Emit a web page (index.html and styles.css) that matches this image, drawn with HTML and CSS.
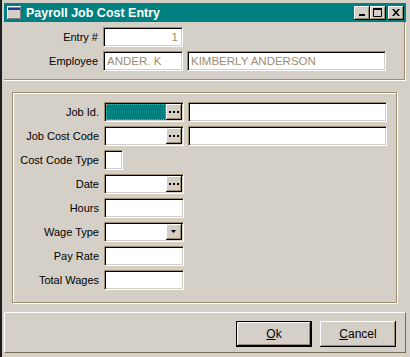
FILE: index.html
```html
<!DOCTYPE html>
<html>
  <head>
    <link rel="stylesheet" href="styles.css">
  </head>
  <body>
    <div class="window">

      <div class="titlebar">
        <svg class="app-icon" width="14" height="13" viewBox="0 0 14 13">
          <rect x="0" y="0" width="14" height="13" fill="#ffffff"/>
          <rect x="1" y="1" width="13" height="12" fill="#808080"/>
          <rect x="1" y="1" width="12" height="11" fill="#d4d0c8"/>
          <rect x="1" y="1" width="12" height="3" fill="#1c3c9c"/>
          <rect x="1" y="1" width="12" height="1" fill="#6a8ad8"/>
        </svg>
        <span class="title">Payroll Job Cost Entry</span>
        <div class="caption-buttons">
          <span class="cap-btn">
            <svg width="8" height="8" viewBox="0 0 8 8"><rect x="1" y="6" width="6" height="2" fill="#000"/></svg>
          </span>
          <span class="cap-btn">
            <svg width="9" height="9" viewBox="0 0 9 9"><path d="M0.5 1.5h8v7h-8z" fill="none" stroke="#000"/><rect x="0" y="0" width="9" height="2" fill="#000"/></svg>
          </span>
          <span class="cap-btn close">
            <svg width="8" height="7" viewBox="0 0 8 7"><path d="M0 0h2l2 2.5 2-2.5h2l-3 3.5 3 3.5h-2l-2-2.5-2 2.5h-2l3-3.5z" fill="#000"/></svg>
          </span>
        </div>
      </div>

      <!-- header: entry number and employee -->
      <div class="panel header-panel">
        <div class="row">
          <span class="label">Entry #</span>
          <div class="field ro num">1</div>
        </div>
        <div class="row">
          <span class="label">Employee</span>
          <div class="field ro">ANDER. K</div>
          <div class="field ro wide">KIMBERLY ANDERSON</div>
        </div>
      </div>

      <!-- job cost details -->
      <div class="panel body-panel">
        <div class="group">
          <div class="row">
            <span class="label">Job Id.</span>
            <div class="field picker">
              <div class="value focused"></div>
              <span class="mini-btn">
                <svg width="10" height="4" viewBox="0 0 10 4"><rect x="0" y="1" width="2" height="2" fill="#000"/><rect x="4" y="1" width="2" height="2" fill="#000"/><rect x="8" y="1" width="2" height="2" fill="#000"/></svg>
              </span>
            </div>
            <div class="field wide"></div>
          </div>
          <div class="row">
            <span class="label">Job Cost Code</span>
            <div class="field picker">
              <div class="value"></div>
              <span class="mini-btn">
                <svg width="10" height="4" viewBox="0 0 10 4"><rect x="0" y="1" width="2" height="2" fill="#000"/><rect x="4" y="1" width="2" height="2" fill="#000"/><rect x="8" y="1" width="2" height="2" fill="#000"/></svg>
              </span>
            </div>
            <div class="field wide"></div>
          </div>
          <div class="row">
            <span class="label">Cost Code Type</span>
            <div class="field tiny"></div>
          </div>
          <div class="row">
            <span class="label">Date</span>
            <div class="field picker">
              <div class="value"></div>
              <span class="mini-btn">
                <svg width="10" height="4" viewBox="0 0 10 4"><rect x="0" y="1" width="2" height="2" fill="#000"/><rect x="4" y="1" width="2" height="2" fill="#000"/><rect x="8" y="1" width="2" height="2" fill="#000"/></svg>
              </span>
            </div>
          </div>
          <div class="row">
            <span class="label">Hours</span>
            <div class="field"></div>
          </div>
          <div class="row">
            <span class="label">Wage Type</span>
            <div class="field picker">
              <div class="value"></div>
              <span class="mini-btn">
                <svg width="5" height="3" viewBox="0 0 5 3"><path d="M0 0h5l-2.5 3z" fill="#000"/></svg>
              </span>
            </div>
          </div>
          <div class="row">
            <span class="label">Pay Rate</span>
            <div class="field"></div>
          </div>
          <div class="row">
            <span class="label">Total Wages</span>
            <div class="field"></div>
          </div>
        </div>
      </div>

      <div class="panel footer-panel">
        <button class="btn default"><u>O</u>k</button>
        <button class="btn"><u>C</u>ancel</button>
      </div>

    </div>
  </body>
</html>
```

FILE: styles.css
```css
body{
  margin:0;
  background-color:#d4d0c8;
  font-family:'Liberation Sans', Arial, sans-serif;
  font-size:11px;
  color:#000;
}

.window{
  box-sizing:border-box;
  width:410px;
  height:357px;
  background-color:#d4d0c8;
  border-left:2px solid #1c1c1c;
  padding:3px 4px 4px 2px;
  display:flex;
  flex-direction:column;
}

/* title bar */
.titlebar{
  height:19px;
  background-color:#008080;
  display:flex;
  align-items:center;
  padding-left:3px;
}
.app-icon{
  margin-right:5px;
}
.title{
  color:#fff;
  font-weight:bold;
  font-size:12.5px;
  flex:1;
}
.caption-buttons{
  display:flex;
  align-items:center;
  margin-right:2px;
}
.cap-btn{
  box-sizing:border-box;
  width:16px;
  height:14px;
  background-color:#d4d0c8;
  box-shadow:inset -1px -1px 0 #000, inset 1px 1px 0 #fff, inset -2px -2px 0 #9d8d6d;
  display:flex;
  align-items:center;
  justify-content:center;
}
.cap-btn svg{
  margin:0 1px 1px 0;
}
.cap-btn.close{
  margin-left:2px;
}

/* panels */
.panel{
  box-sizing:border-box;
}
.header-panel{
  height:58px;
  padding-top:5px;
  border-bottom:1px solid #9d8d6d;
  border-right:1px solid #9d8d6d;
  margin-right:1px;
  box-shadow:1px 1px 0 #fff;
}
.header-panel .label{
  width:94px;
}
.body-panel{
  height:232px;
  border-top:1px solid #fff;
  padding:11px 0 0 8px;
}
.group{
  box-sizing:border-box;
  width:385px;
  height:211px;
  border:1px solid #9d8d6d;
  box-shadow:inset 1px 1px 0 #fff, 1px 1px 0 #fff;
  padding:9px 0 0 1px;
}
.group .label{
  width:85px;
}
.footer-panel{
  height:41px;
  border-top:1px solid #fff;
  border-left:1px solid #fff;
  border-bottom:1px solid #7a6c52;
  border-right:1px solid #7a6c52;
  display:flex;
  justify-content:flex-end;
  gap:8px;
  padding:8px 9px 0 0;
}

/* form rows */
.row{
  display:flex;
  align-items:center;
  height:20px;
  margin-bottom:4px;
}
.label{
  text-align:right;
  padding-right:5px;
  flex-shrink:0;
}
.field{
  box-sizing:border-box;
  width:80px;
  height:20px;
  background-color:#fff;
  border-top:1px solid #9d8d6d;
  border-left:1px solid #9d8d6d;
  border-right:1px solid #fff;
  border-bottom:1px solid #fff;
  box-shadow:inset 1px 1px 0 #000, inset -1px -1px 0 #d4d0c8;
  padding:0 3px;
  line-height:18px;
  white-space:nowrap;
  overflow:hidden;
}
.field.ro{
  color:#9d8d6d;
  font-size:11.5px;
}
.field.num{
  text-align:right;
  padding-right:4px;
}
.field.wide{
  width:199px;
  margin-left:4px;
}
.field.tiny{
  width:19px;
}
.field.picker{
  display:flex;
  padding:1px;
}
.value{
  flex:1;
}
.value.focused{
  background-color:#008080;
  outline:1px dotted #f07070;
  outline-offset:-1px;
}
.mini-btn{
  box-sizing:border-box;
  width:16px;
  height:16px;
  background-color:#d4d0c8;
  box-shadow:inset -1px -1px 0 #000, inset 1px 1px 0 #fff, inset -2px -2px 0 #9d8d6d;
  display:flex;
  align-items:center;
  justify-content:center;
}
.mini-btn svg{
  margin:0 1px 1px 0;
}

/* buttons */
.btn{
  box-sizing:border-box;
  width:76px;
  height:26px;
  background-color:#d4d0c8;
  border:none;
  box-shadow:inset -1px -1px 0 #000, inset 1px 1px 0 #fff, inset -2px -2px 0 #9d8d6d;
  font-family:'Liberation Sans', Arial, sans-serif;
  font-size:12px;
  color:#000;
  padding:0;
}
.btn.default{
  border:1px solid #000;
}
```
